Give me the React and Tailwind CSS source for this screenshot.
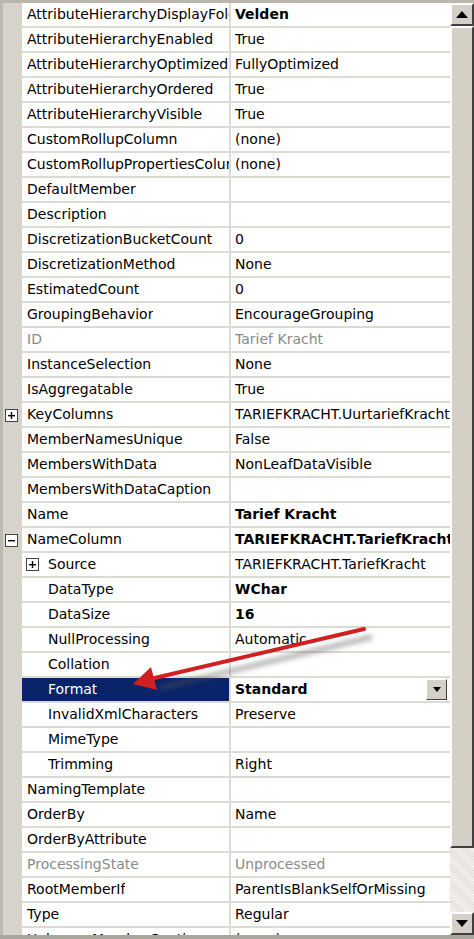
import React from 'react'

const rows = [
  { name: 'AttributeHierarchyDisplayFolder', value: 'Velden', bold: true },
  { name: 'AttributeHierarchyEnabled', value: 'True' },
  { name: 'AttributeHierarchyOptimized', value: 'FullyOptimized' },
  { name: 'AttributeHierarchyOrdered', value: 'True' },
  { name: 'AttributeHierarchyVisible', value: 'True' },
  { name: 'CustomRollupColumn', value: '(none)' },
  { name: 'CustomRollupPropertiesColumn', value: '(none)' },
  { name: 'DefaultMember', value: '' },
  { name: 'Description', value: '' },
  { name: 'DiscretizationBucketCount', value: '0' },
  { name: 'DiscretizationMethod', value: 'None' },
  { name: 'EstimatedCount', value: '0' },
  { name: 'GroupingBehavior', value: 'EncourageGrouping' },
  { name: 'ID', value: 'Tarief Kracht', disabled: true },
  { name: 'InstanceSelection', value: 'None' },
  { name: 'IsAggregatable', value: 'True' },
  { name: 'KeyColumns', value: 'TARIEFKRACHT.UurtariefKracht', toggle: '+' },
  { name: 'MemberNamesUnique', value: 'False' },
  { name: 'MembersWithData', value: 'NonLeafDataVisible' },
  { name: 'MembersWithDataCaption', value: '' },
  { name: 'Name', value: 'Tarief Kracht', bold: true },
  { name: 'NameColumn', value: 'TARIEFKRACHT.TariefKracht', bold: true, toggle: '-' },
  { name: 'Source', value: 'TARIEFKRACHT.TariefKracht', child: true, toggle: '+' },
  { name: 'DataType', value: 'WChar', bold: true, child: true },
  { name: 'DataSize', value: '16', bold: true, child: true },
  { name: 'NullProcessing', value: 'Automatic', child: true },
  { name: 'Collation', value: '', child: true },
  { name: 'Format', value: 'Standard', bold: true, child: true, selected: true },
  { name: 'InvalidXmlCharacters', value: 'Preserve', child: true },
  { name: 'MimeType', value: '', child: true },
  { name: 'Trimming', value: 'Right', child: true },
  { name: 'NamingTemplate', value: '' },
  { name: 'OrderBy', value: 'Name' },
  { name: 'OrderByAttribute', value: '' },
  { name: 'ProcessingState', value: 'Unprocessed', disabled: true },
  { name: 'RootMemberIf', value: 'ParentIsBlankSelfOrMissing' },
  { name: 'Type', value: 'Regular' },
  { name: 'UnknownMemberCaption', value: '(none)' },
]

function Toggle({ sign }) {
  return (
    <span className="flex h-[13px] w-[13px] items-center justify-center border border-[#444] bg-white">
      <svg width="9" height="9" viewBox="0 0 9 9">
        <rect x="1" y="4" width="7" height="1.4" fill="#000" />
        {sign === '+' && <rect x="3.8" y="1" width="1.4" height="7" fill="#000" />}
      </svg>
    </span>
  )
}

function Row({ row }) {
  const text = row.disabled ? 'text-[#8a8a8a]' : 'text-black'
  return (
    <div className="flex h-[25px] shrink-0">
      <div className="flex w-[22px] shrink-0 items-center justify-center border-l-[3px] border-[#bcb9b1] bg-[#d6d3cb] pr-[2px]">
        {row.toggle && !row.child && <Toggle sign={row.toggle} />}
      </div>
      <div
        className={
          'flex w-[209px] shrink-0 items-center overflow-hidden whitespace-nowrap border-b-2 border-r-2 border-[#dcdad4] ' +
          (row.selected ? 'bg-[#0a246a] text-white ' : 'bg-white ' + text + ' ') +
          (row.child ? 'pl-[4px]' : 'pl-[5px]')
        }
      >
        {row.child && (
          <span className="mr-[9px] flex w-[13px] shrink-0">{row.toggle && <Toggle sign={row.toggle} />}</span>
        )}
        <span className="overflow-hidden">{row.name}</span>
      </div>
      <div className="flex min-w-0 flex-1 items-center overflow-hidden whitespace-nowrap border-b-2 border-[#dcdad4] bg-white pl-[4px]">
        <span className={'overflow-hidden ' + (row.bold ? 'font-bold ' : '') + text}>{row.value}</span>
        {row.selected && (
          <span className="ml-auto mr-[3px] flex h-[21px] w-[21px] shrink-0 items-center justify-center border border-b-[#404040] border-l-white border-r-[#404040] border-t-white bg-[#d4d0c8]">
            <svg width="8" height="5" viewBox="0 0 8 5">
              <path d="M0 0h8L4 5z" fill="#000" />
            </svg>
          </span>
        )}
      </div>
    </div>
  )
}

export default function App() {
  return (
    <div className="relative h-[939px] w-[474px] overflow-hidden border-t-[3px] border-[#b9b6ae] bg-[#d6d3cb] text-[14px] font-['DejaVu_Sans',Tahoma,sans-serif]">
      <div className="flex h-full">
        <div className="flex w-[450px] shrink-0 flex-col">
          {rows.map((row) => (
            <Row key={row.name} row={row} />
          ))}
        </div>
        <div className="flex flex-1 flex-col bg-[#eceae4] pb-[4px]">
          <div className="flex h-[23px] shrink-0 items-center justify-center border-2 border-b-[#404040] border-l-white border-r-[#404040] border-t-white bg-[#d4d0c8]">
            <svg width="12" height="7" viewBox="0 0 12 7">
              <path d="M6 0l6 7H0z" fill="#000" />
            </svg>
          </div>
          <div className="h-[822px] shrink-0 border-2 border-b-[#404040] border-l-white border-r-[#404040] border-t-white bg-[#d4d0c8]" />
          <div className="flex-1 bg-[repeating-linear-gradient(45deg,#f4f3ee_0px,#f4f3ee_1px,#e2e0d8_1px,#e2e0d8_2px)]" />
          <div className="flex h-[23px] shrink-0 items-center justify-center border-2 border-b-[#404040] border-l-white border-r-[#404040] border-t-white bg-[#d4d0c8]">
            <svg width="12" height="7" viewBox="0 0 12 7">
              <path d="M0 0h12L6 7z" fill="#000" />
            </svg>
          </div>
        </div>
      </div>
      <div className="absolute bottom-0 left-0 h-[4px] w-full bg-[#a9a69e]" />
      <svg className="pointer-events-none absolute left-0 top-0" width="474" height="939" viewBox="0 0 474 939">
        <defs>
          <filter id="blur" x="-10%" y="-50%" width="120%" height="200%">
            <feGaussianBlur stdDeviation="2.5" />
          </filter>
        </defs>
        <g transform="translate(0 -3)">
          <line x1="372" y1="637" x2="160" y2="688" stroke="#555" strokeOpacity="0.45" strokeWidth="5" filter="url(#blur)" />
          <line x1="364" y1="629" x2="146" y2="680" stroke="#d21f1f" strokeWidth="4" strokeLinecap="round" />
          <path d="M133 684 L151 667 L157 690 Z" fill="#d21f1f" />
        </g>
      </svg>
    </div>
  )
}
